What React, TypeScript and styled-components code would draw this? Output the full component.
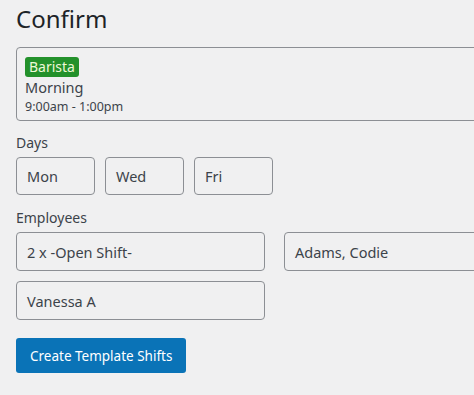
import styled, { createGlobalStyle } from 'styled-components'

const Global = createGlobalStyle`
  html, body {
    margin: 0;
    padding: 0;
    background: #f0f0f1;
    overflow: hidden;
  }
  body {
    font-family: 'Noto Sans', 'Open Sans', sans-serif;
    color: #3c434a;
  }
`

const Page = styled.div`
  width: 517px;
  padding: 0 16px;
`
const Title = styled.h1`
  margin: 0;
  padding-top: 4px;
  height: 43px;
  font-size: 24px;
  font-weight: 400;
  line-height: 30px;
  color: #1d2327;
`
const ShiftCard = styled.div`
  box-sizing: border-box;
  border: 1px solid #8c8f94;
  border-radius: 4px;
  padding: 9px 8px 0;
  height: 74px;
`
const Badge = styled.div`
  width: fit-content;
  background: #23912b;
  color: #eef8d8;
  font-size: 14px;
  line-height: 20px;
  padding: 0 4px;
  border-radius: 3px;
`
const ShiftName = styled.div`
  font-size: 14.5px;
  line-height: 21px;
  color: #3c434a;
`
const ShiftTime = styled.div`
  font-size: 12.5px;
  line-height: 18px;
  color: #3c434a;
`
const Label = styled.div<{ $gap: number }>`
  margin-top: ${(p) => p.$gap}px;
  font-size: 14px;
  line-height: 20px;
  color: #3c434a;
`
const DayRow = styled.div`
  display: flex;
  gap: 10px;
  margin-top: 4px;
`
const Field = styled.div<{ $w: number; $h: number }>`
  box-sizing: border-box;
  width: ${(p) => p.$w}px;
  height: ${(p) => p.$h}px;
  border: 1px solid #8c8f94;
  border-radius: 4px;
  padding: 0 10px;
  display: flex;
  align-items: center;
  font-size: 14.5px;
  color: #3c434a;
`
const EmpGrid = styled.div`
  display: grid;
  grid-template-columns: 249px 249px;
  column-gap: 19px;
  row-gap: 10px;
  margin-top: 4px;
`
const Button = styled.button`
  display: block;
  margin-top: 18px;
  height: 35px;
  padding: 0 14px;
  background: #0a73b7;
  color: #fff;
  border: none;
  border-radius: 3px;
  font-family: inherit;
  font-size: 13.5px;
`

export default function App() {
  return (
    <>
      <Global />
      <Page>
        <Title>Confirm</Title>
        <ShiftCard>
          <Badge>Barista</Badge>
          <ShiftName>Morning</ShiftName>
          <ShiftTime>9:00am - 1:00pm</ShiftTime>
        </ShiftCard>
        <Label $gap={12}>Days</Label>
        <DayRow>
          {['Mon', 'Wed', 'Fri'].map((d) => (
            <Field key={d} $w={79} $h={38}>{d}</Field>
          ))}
        </DayRow>
        <Label $gap={13}>Employees</Label>
        <EmpGrid>
          {['2 x -Open Shift-', 'Adams, Codie', 'Vanessa A'].map((e) => (
            <Field key={e} $w={249} $h={39}>{e}</Field>
          ))}
        </EmpGrid>
        <Button>Create Template Shifts</Button>
      </Page>
    </>
  )
}
